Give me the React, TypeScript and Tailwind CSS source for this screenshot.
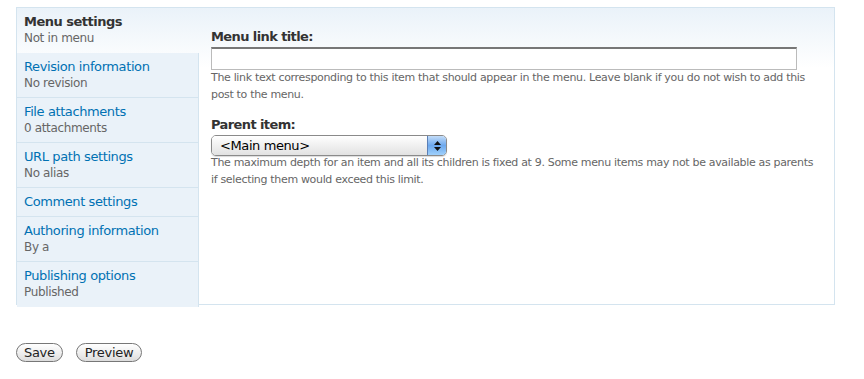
import React from "react";

const tabs = [
  { title: "Menu settings", summary: "Not in menu", active: true },
  { title: "Revision information", summary: "No revision" },
  { title: "File attachments", summary: "0 attachments" },
  { title: "URL path settings", summary: "No alias" },
  { title: "Comment settings" },
  { title: "Authoring information", summary: "By a" },
  { title: "Publishing options", summary: "Published", last: true },
];

const App: React.FC = () => {
  return (
    <div className="min-h-screen bg-white px-4 pt-[7px] font-['DejaVu_Sans',Verdana,sans-serif]">
      <div className="flex w-[819px] h-[298px] border border-[#d4e4ef] bg-[linear-gradient(to_bottom,#eaf2f9_0px,#ffffff_60px)]">
        {/* vertical tabs */}
        <ul className="w-[182px] shrink-0">
          {tabs.map((t) =>
            t.active ? (
              <li key={t.title} className="px-[7px] py-[6px] border-b border-transparent">
                <div className="text-[13px] leading-[16px] font-bold tracking-[-0.5px] text-[#333]">{t.title}</div>
                <div className="text-[12px] leading-[16px] tracking-[-0.35px] text-[#666]">{t.summary}</div>
              </li>
            ) : (
              <li
                key={t.title}
                className={`px-[7px] py-[6px] bg-[#eaf2f9] border-r border-[#d4e4ef] ${t.last ? "h-[45px]" : "border-b"}`}
              >
                <div className="text-[13px] leading-[16px] tracking-[-0.4px] text-[#0071b3]">{t.title}</div>
                {t.summary && (
                  <div className="text-[12px] leading-[16px] tracking-[-0.35px] text-[#666]">{t.summary}</div>
                )}
              </li>
            )
          )}
        </ul>

        {/* pane */}
        <div className="flex-1 pl-[12px] pt-[21px]">
          <label className="block text-[13px] leading-[16px] font-bold tracking-[-0.6px] text-[#333] mb-[2px]">
            Menu link title:
          </label>
          <div className="w-[586px] h-[23px] border border-[#bbb] border-t-[#777] border-t-2 bg-white" />
          <p className="mt-[-1px] text-[11px] leading-[17px] tracking-[-0.33px] text-[#666] w-[606px]">
            The link text corresponding to this item that should appear in the menu. Leave blank if you do not wish to add this post to the menu.
          </p>

          <label className="block mt-[14px] text-[13px] leading-[16px] font-bold tracking-[-0.6px] text-[#333] mb-[2px]">
            Parent item:
          </label>
          <div className="flex w-[236px] h-[21px] rounded-[5px] border border-[#8a8a8a] overflow-hidden shadow-[0_1px_1px_rgba(0,0,0,0.15)]">
            <div className="flex-1 pl-[8px] text-[13px] leading-[19px] tracking-[-0.4px] text-black bg-[linear-gradient(to_bottom,#ffffff,#f0f0f0_50%,#e2e2e2)]">
              &lt;Main menu&gt;
            </div>
            <div className="w-[19px] flex flex-col items-center justify-center gap-[2px] border-l border-[#5b7fb5] bg-[linear-gradient(to_bottom,#c3dcf8,#6ca8ee_50%,#9fd0fb)]">
              <svg width="7" height="4" viewBox="0 0 7 4"><path d="M3.5 0 L7 4 L0 4 Z" fill="#111" /></svg>
              <svg width="7" height="4" viewBox="0 0 7 4"><path d="M0 0 L7 0 L3.5 4 Z" fill="#111" /></svg>
            </div>
          </div>
          <p className="mt-[-2px] text-[11px] leading-[17px] tracking-[-0.33px] text-[#666] w-[606px]">
            The maximum depth for an item and all its children is fixed at 9. Some menu items may not be available as parents if selecting them would exceed this limit.
          </p>
        </div>
      </div>

      <div className="flex gap-[13px] mt-[38px]">
        <button className="h-[19px] px-[7px] rounded-full border border-[#777] bg-[linear-gradient(to_bottom,#ffffff,#ececec_60%,#dcdcdc)] text-[13px] leading-[17px] tracking-[-0.3px] text-[#222]">
          Save
        </button>
        <button className="h-[19px] px-[8px] rounded-full border border-[#777] bg-[linear-gradient(to_bottom,#ffffff,#ececec_60%,#dcdcdc)] text-[13px] leading-[17px] tracking-[-0.3px] text-[#222]">
          Preview
        </button>
      </div>
    </div>
  );
};

export default App;
